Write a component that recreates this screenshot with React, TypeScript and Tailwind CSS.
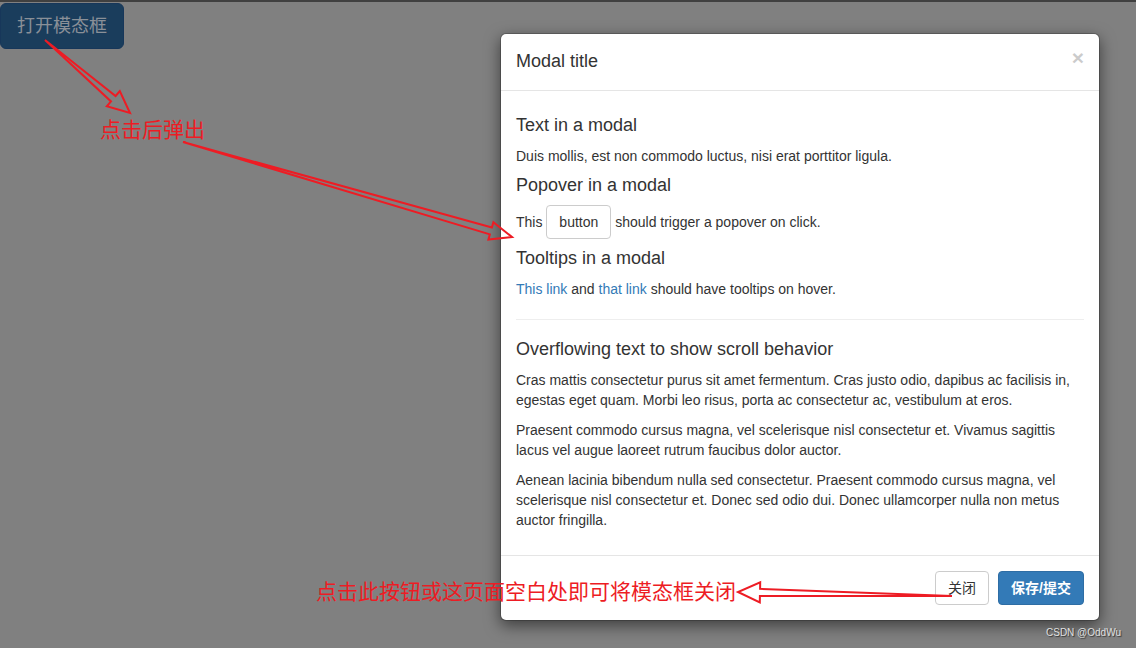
import React from "react";

const RED = "#ed1c24";

// hollow "screenshot tool" arrows drawn over the page
function Arrows() {
  return (
    <svg className="pointer-events-none absolute left-0 top-0" width={1136} height={648} viewBox="0 0 1136 648">
      <g fill="none" stroke={RED} strokeWidth={2} strokeLinejoin="miter">
        <polygon points="45,40 115.6,96 119.8,91.1 130,113 106.8,106.3 111,101.4" />
        <polygon points="183,142 491.9,227.5 493.4,222.3 512,237 488.4,239.5 489.9,234.3" />
        <polygon points="952,596 760.1,588.9 760.2,582.4 738,592 759.8,602.4 759.9,595.9" />
      </g>
    </svg>
  );
}

function Modal() {
  return (
    <div className="absolute left-[500px] top-[33px] w-[600px] rounded-[6px] border border-black/20 bg-white bg-clip-padding text-[14px] leading-[20px] text-[#333] shadow-[0_5px_15px_rgba(0,0,0,0.5)]">
      <div className="flex items-start justify-between border-b border-[#e5e5e5] p-[15px]">
        <h4 className="text-[18px] leading-[25.7px] font-medium">Modal title</h4>
        <button className="-mt-[2px] text-[21px] font-bold leading-none text-black opacity-20">×</button>
      </div>

      <div className="p-[15px]">
        <h4 className="my-[10px] text-[18px] leading-[19.8px] font-medium">Text in a modal</h4>
        <p className="mb-[10px]">Duis mollis, est non commodo luctus, nisi erat porttitor ligula.</p>

        <h4 className="my-[10px] text-[18px] leading-[19.8px] font-medium">Popover in a modal</h4>
        <p className="mb-[10px]">
          This{" "}
          <button className="inline-block rounded-[4px] border border-[#ccc] bg-white px-[12px] py-[6px] text-[14px] leading-[20px] text-[#333]">
            button
          </button>{" "}
          should trigger a popover on click.
        </p>

        <h4 className="my-[10px] text-[18px] leading-[19.8px] font-medium">Tooltips in a modal</h4>
        <p className="mb-[10px]">
          <a className="text-[#337ab7]">This link</a> and <a className="text-[#337ab7]">that link</a> should have tooltips on hover.
        </p>

        <hr className="my-[20px] border-t border-[#eee]" />

        <h4 className="my-[10px] text-[18px] leading-[19.8px] font-medium">Overflowing text to show scroll behavior</h4>
        <p className="mb-[10px]">
          Cras mattis consectetur purus sit amet fermentum. Cras justo odio, dapibus ac facilisis in, egestas eget quam. Morbi leo risus, porta ac consectetur ac, vestibulum at eros.
        </p>
        <p className="mb-[10px]">
          Praesent commodo cursus magna, vel scelerisque nisl consectetur et. Vivamus sagittis lacus vel augue laoreet rutrum faucibus dolor auctor.
        </p>
        <p className="mb-[10px]">
          Aenean lacinia bibendum nulla sed consectetur. Praesent commodo cursus magna, vel scelerisque nisl consectetur et. Donec sed odio dui. Donec ullamcorper nulla non metus auctor fringilla.
        </p>
      </div>

      <div className="flex justify-end gap-[9px] border-t border-[#e5e5e5] p-[15px]">
        <button className="rounded-[4px] border border-[#ccc] bg-white px-[12px] py-[6px] text-[14px] leading-[20px] text-[#333]">关闭</button>
        <button className="rounded-[4px] border border-[#2e6da4] bg-[#337ab7] px-[12px] py-[6px] text-[14px] leading-[20px] font-bold text-white">保存/提交</button>
      </div>
    </div>
  );
}

export default function App() {
  return (
    <div className="relative h-[648px] w-[1136px] overflow-hidden bg-[#808080] font-['Liberation_Sans','Noto_Sans_CJK_SC',sans-serif]">
      <div className="h-[2px] bg-[#404040]" />
      <button className="mt-px rounded-[6px] border border-[#17375a] bg-[#1a3d5c] px-[16px] py-[10px] text-[18px] leading-[24px] text-[#8a9098]">
        打开模态框
      </button>

      <Modal />
      <Arrows />

      <div className="absolute left-[100px] top-[119px] text-[21px] leading-[21px] text-[#ed1c24]">点击后弹出</div>
      <div className="absolute left-[316px] top-[581px] text-[21px] leading-[21px] text-[#ed1c24]">点击此按钮或这页面空白处即可将模态框关闭</div>

      <div className="absolute left-[1046px] top-[627px] text-[10px] leading-[12px] text-[#e0e0e0] [text-shadow:1px_1px_1px_rgba(0,0,0,0.6)]">
        CSDN @OddWu
      </div>
    </div>
  );
}
